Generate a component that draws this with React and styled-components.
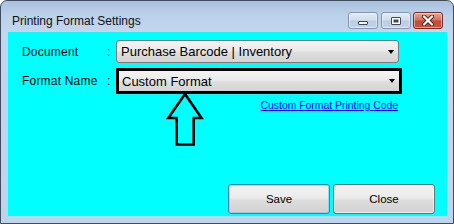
import styled, { createGlobalStyle } from "styled-components";

const Global = createGlobalStyle`
    html, body {
        margin: 0;
        padding: 0;
        background: #ffffff;
    }
    * {
        box-sizing: border-box;
    }
`

const Window = styled.div`
    width: 454px;
    height: 224px;
    display: flex;
    flex-direction: column;
    padding: 0 6px 7px 7px;
    border: 1px solid #404d5e;
    border-radius: 7px 7px 0 0;
    background: linear-gradient(#a9c1de 0px, #bcd1ea 14px, #c2d6ee 31px, #bfd3eb 100%);
    font-family: "Liberation Sans", Arial, sans-serif;
`

const TitleBar = styled.div`
    height: 31px;
    padding-top: 8px;
    display: flex;
    align-items: center;
    justify-content: space-between;
`

const Title = styled.span`
    margin-left: 4px;
    font-size: 12px;
    color: #111;
`

const Controls = styled.div`
    display: flex;
    margin-right: 4px;
`

const CtrlButton = styled.div`
    width: 30px;
    height: 17px;
    margin-left: ${p => p.$gap || 0}px;
    display: flex;
    align-items: center;
    justify-content: center;
    border: 1px solid ${p => p.$close ? "#7a2a25" : "#8296b0"};
    border-radius: 3px;
    background: ${p => p.$close
        ? "linear-gradient(#e4a796 0%, #d5735e 45%, #c24a33 55%, #c8553c 100%)"
        : "linear-gradient(#e3ebf5 0%, #d1deed 45%, #bccde2 55%, #c3d4e8 100%)"};
    box-shadow: inset 0 0 0 1px rgba(255,255,255,0.45);
`

const MinGlyph = styled.div`
    width: 10px;
    height: 4px;
    margin-top: 5px;
    background: #fff;
    border: 1px solid #3d4a5c;
    border-radius: 1px;
`

const MaxGlyph = styled.div`
    width: 10px;
    height: 8px;
    border: 1px solid #3d4a5c;
    background: #fff;
    box-shadow: inset 0 0 0 1.5px #fff, inset 0 0 0 3px #3d4a5c;
    border-radius: 1px;
`

const Client = styled.div`
    flex: 1;
    position: relative;
    display: flex;
    flex-direction: column;
    padding: 8px 12px 2px 14px;
    background: #00ffff;
`

const FieldRow = styled.div`
    display: flex;
    align-items: center;
    margin-top: ${p => p.$top || 0}px;
`

const Label = styled.span`
    width: 85px;
    font-size: 12px;
    letter-spacing: 0.2px;
    color: #000;
`

const Colon = styled.span`
    width: 9px;
    font-size: 12px;
    color: #000;
`

const Combo = styled.div`
    position: relative;
    width: ${p => p.$highlight ? 286 : 283}px;
    height: ${p => p.$highlight ? 26 : 23}px;
    display: flex;
    align-items: center;
    padding-left: ${p => p.$highlight ? 3 : 4}px;
    font-size: 13px;
    color: #000;
    border: ${p => p.$highlight ? "3px solid #000" : "1px solid #7a7a7a"};
    border-radius: ${p => p.$highlight ? 0 : 3}px;
    background: linear-gradient(#f3f3f3 0%, #ebebeb 45%, #dedede 55%, #d3d3d3 100%);
`

const Caret = styled.span`
    position: absolute;
    right: ${p => p.$right}px;
    top: 50%;
    margin-top: -2px;
    width: 0;
    height: 0;
    border-left: 3.5px solid transparent;
    border-right: 3.5px solid transparent;
    border-top: 4px solid #000;
`

const LinkRow = styled.div`
    display: flex;
    justify-content: flex-end;
    margin-top: 5px;
    margin-right: 37px;
`

const Link = styled.a`
    font-size: 10.4px;
    line-height: 13px;
    color: #0000ff;
    text-decoration: underline;
    cursor: pointer;
`

const ButtonRow = styled.div`
    margin-top: auto;
    display: flex;
    justify-content: flex-end;
    gap: 3px;
`

const Button = styled.button`
    width: 102px;
    height: 30px;
    padding: 0;
    font-family: "Liberation Sans", Arial, sans-serif;
    font-size: 11.5px;
    color: #000;
    border: 1px solid ${p => p.$default ? "#3c7fb1" : "#707070"};
    border-radius: 3px;
    background: linear-gradient(#f3f3f3 0%, #ebebeb 45%, #dddddd 55%, #d1d1d1 100%);
    box-shadow: inset 0 0 0 1px ${p => p.$default ? "rgba(120,200,240,0.6)" : "rgba(255,255,255,0.6)"};
`

const Pointer = styled.svg`
    position: absolute;
    left: 157px;
    top: 59px;
    width: 40px;
    height: 57px;
`

const App = () => {
    return (
        <>
            <Global />
            <Window>
                <TitleBar>
                    <Title>Printing Format Settings</Title>
                    <Controls>
                        <CtrlButton><MinGlyph /></CtrlButton>
                        <CtrlButton $gap={3}><MaxGlyph /></CtrlButton>
                        <CtrlButton $gap={2} $close>
                            <svg width="14" height="11" viewBox="0 0 14 11">
                                <path d="M3 1.5 L11 9.5 M11 1.5 L3 9.5" stroke="#5a1c16" strokeWidth="4" strokeLinecap="round" />
                                <path d="M3 1.5 L11 9.5 M11 1.5 L3 9.5" stroke="#fff" strokeWidth="2.2" strokeLinecap="round" />
                            </svg>
                        </CtrlButton>
                    </Controls>
                </TitleBar>
                <Client>
                    <FieldRow>
                        <Label>Document</Label>
                        <Colon>:</Colon>
                        <Combo>
                            Purchase Barcode | Inventory
                            <Caret $right={4} />
                        </Combo>
                    </FieldRow>
                    <FieldRow $top={5}>
                        <Label>Format Name</Label>
                        <Colon>:</Colon>
                        <Combo $highlight>
                            Custom Format
                            <Caret $right={4} />
                        </Combo>
                    </FieldRow>
                    <LinkRow>
                        <Link>Custom Format Printing Code</Link>
                    </LinkRow>
                    <ButtonRow>
                        <Button $default>Save</Button>
                        <Button>Close</Button>
                    </ButtonRow>
                    <Pointer viewBox="0 0 40 57">
                        <path
                            d="M20 3 L36.5 27 L28.7 27 L28.7 53.5 L11.7 53.5 L11.7 27 L3.3 27 Z"
                            fill="none"
                            stroke="#000"
                            strokeWidth="2.6"
                            strokeLinejoin="miter"
                        />
                    </Pointer>
                </Client>
            </Window>
        </>
    )
}

export default App
